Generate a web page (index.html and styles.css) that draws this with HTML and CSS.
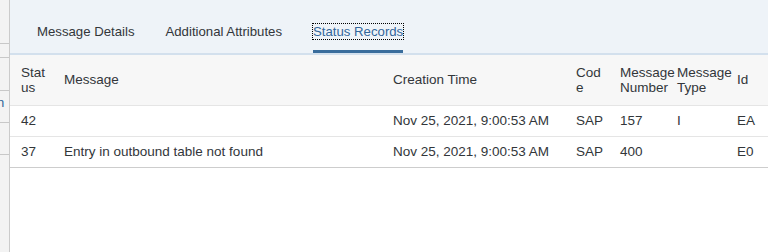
FILE: index.html
```html
<!DOCTYPE html>
<html>
  <head>
    <title>Status Records</title>
    <link rel="stylesheet" href="styles.css">
  </head>

  <body>
    <div class="page">
      <div class="backdrop">
        <div class="bd-line" style="margin-top: 43px"></div>
        <div class="bd-line" style="margin-top: 13px"></div>
        <div class="bd-line" style="margin-top: 32px"></div>
        <div class="bd-text">n</div>
        <div class="bd-line" style="margin-top: 13px"></div>
        <div class="bd-line" style="margin-top: 31px"></div>
      </div>

      <div class="dialog">
        <div class="tabbar">
          <div class="tab"><span>Message Details</span></div>
          <div class="tab"><span>Additional Attributes</span></div>
          <div class="tab selected"><span class="focus">Status Records</span></div>
        </div>

        <table class="records">
          <colgroup>
            <col style="width: 46px">
            <col style="width: 329px">
            <col style="width: 183px">
            <col style="width: 44px">
            <col style="width: 57px">
            <col style="width: 60px">
            <col style="width: 39px">
          </colgroup>
          <thead>
            <tr>
              <th class="split">Status</th>
              <th>Message</th>
              <th>Creation Time</th>
              <th class="split">Code</th>
              <th>Message Number</th>
              <th>Message Type</th>
              <th>Id</th>
            </tr>
          </thead>
          <tbody>
            <tr>
              <td>42</td>
              <td></td>
              <td>Nov 25, 2021, 9:00:53 AM</td>
              <td>SAP</td>
              <td>157</td>
              <td>I</td>
              <td>EA</td>
            </tr>
            <tr class="last">
              <td>37</td>
              <td>Entry in outbound table not found</td>
              <td>Nov 25, 2021, 9:00:53 AM</td>
              <td>SAP</td>
              <td>400</td>
              <td></td>
              <td>E0</td>
            </tr>
          </tbody>
        </table>
      </div>
    </div>
  </body>
</html>
```

FILE: styles.css
```css
*, *:before, *:after {
  box-sizing: border-box;
  padding: 0;
  margin: 0;
}

body {
  width: 768px;
  height: 252px;
  overflow: hidden;
  font-family: "Liberation Sans", Arial, sans-serif;
  font-size: 13.5px;
  color: #32363a;
  background: #fff;
}

.page {
  display: flex;
  height: 252px;
}

/* bit of the page behind the dialog */
.backdrop {
  width: 10px;
  flex: none;
  background: #f3f3f3;
  border-right: 1px solid #cbcbcb;
  overflow: hidden;
}

.bd-line {
  height: 1px;
  background: #c8c8c8;
}

.bd-text {
  height: 12px;
  margin-top: 6px;
  margin-left: -3px;
  color: #2f6497;
  font-size: 13px;
  line-height: 12px;
}

.dialog {
  flex: 1;
  display: flex;
  flex-direction: column;
  background: #fff;
}

.tabbar {
  display: flex;
  gap: 31px;
  height: 55px;
  padding-left: 27px;
  background: #eef3f8;
  border-bottom: 2px solid #d3e0ed;
  font-size: 13.2px;
}

.tab {
  display: flex;
  align-items: center;
  padding-top: 12px;
  border-bottom: 3px solid transparent;
  color: #32363a;
  white-space: nowrap;
}

.tab.selected {
  color: #33669a;
  border-bottom-color: #3a6d9c;
}

.focus {
  outline: 1px dotted #000;
}

.records {
  width: 758px;
  table-layout: fixed;
  border-collapse: collapse;
  font: inherit;
}

.records th {
  height: 50px;
  padding: 0 8px 0 8px;
  background: #f7f7f7;
  border-bottom: 1px solid #e5e5e5;
  font-weight: normal;
  text-align: left;
  vertical-align: middle;
  line-height: 15px;
  color: #32363a;
  white-space: normal;
}

.records th.split {
  word-break: break-all;
}

.records td {
  height: 31px;
  padding: 0 8px;
  border-bottom: 1px solid #e5e5e5;
  vertical-align: middle;
  white-space: nowrap;
}

.records th:first-child, .records td:first-child {
  padding-left: 11px;
}

.records tr.last td {
  border-bottom-color: #cdcdcd;
}
```
